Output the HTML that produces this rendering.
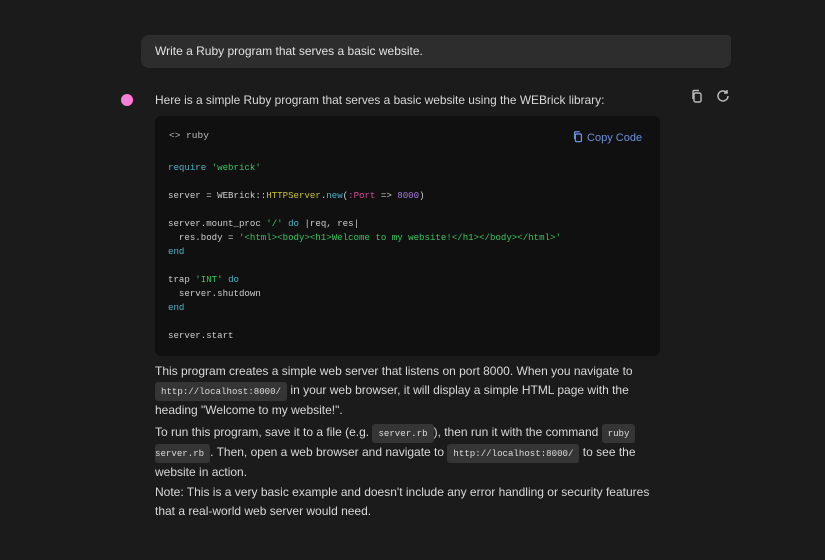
<!DOCTYPE html>
<html><head><style>
body{margin:0;width:825px;height:560px;background:#1b1b1b;font-family:"Liberation Sans",sans-serif;color:#d9d9d9;position:relative;overflow:hidden}
.ab{position:absolute}
.bubble{left:141px;top:35px;width:590px;height:33px;background:#2d2d2d;border-radius:8px 4px 8px 8px}
.bubble span{position:absolute;left:14px;top:9px;font-size:12px;color:#e2e2e2}
.dot{left:121px;top:94px;width:12px;height:12px;border-radius:50%;background:#f77fd8}
.intro{left:155px;top:93px;font-size:11.9px}
.code{left:155px;top:116px;width:505px;height:240px;background:#101010;border-radius:6px}
pre{margin:0;position:absolute;left:13px;top:45px;font-family:"Liberation Mono",monospace;font-size:9.1px;line-height:14px;color:#cfcfcf}
.k{color:#4fb3c8}.s{color:#3cc361}.y{color:#c7c13d}.p{color:#d84a9a}.n{color:#a67bd8}
.lang{left:14px;top:14px;font-family:"Liberation Mono",monospace;font-size:9.5px;color:#bbb}
.copy{left:417px;top:14px;font-size:11px;color:#6d8fe0}
.txt{left:155px;width:505px;font-size:12px;line-height:19px}
code{font-family:"Liberation Mono",monospace;font-size:9.1px;background:#353535;border-radius:3px;padding:4px 6px;color:#ddd}
p{margin:0}
</style></head><body>
<div class="ab bubble"><span>Write a Ruby program that serves a basic website.</span></div>
<div class="ab dot"></div>
<div class="ab intro">Here is a simple Ruby program that serves a basic website using the WEBrick library:</div>
<svg class="ab" style="left:690px;top:89px" width="14" height="14" viewBox="0 0 14 14" fill="none" stroke="#bbb" stroke-width="1.4"><rect x="4" y="4" width="7" height="9" rx="1.5"/><path d="M3 10V2.5Q3 1.5 4 1.5h5"/></svg>
<svg class="ab" style="left:716px;top:89px" width="14" height="14" viewBox="0 0 14 14" fill="none" stroke="#bbb" stroke-width="1.5"><path d="M12 7a5 5 0 1 1-1.5-3.6"/><path d="M11 1v3h-3"/></svg>
<div class="ab code">
<div class="ab lang">&lt;&gt; ruby</div>
<div class="ab copy"><svg width="12" height="13" viewBox="0 0 14 14" fill="none" stroke="#6d8fe0" stroke-width="1.5" style="vertical-align:-2px"><rect x="4" y="4" width="7" height="9" rx="1.5"/><path d="M3 10V2.5Q3 1.5 4 1.5h5"/></svg> Copy Code</div>
<pre><span class="k">require</span> <span class="s">'webrick'</span>

server = WEBrick::<span class="y">HTTPServer</span>.<span class="k">new</span>(<span class="p">:Port</span> =&gt; <span class="n">8000</span>)

server.mount_proc <span class="s">'/'</span> <span class="k">do</span> |req, res|
  res.body = <span class="s">'&lt;html&gt;&lt;body&gt;&lt;h1&gt;Welcome to my website!&lt;/h1&gt;&lt;/body&gt;&lt;/html&gt;'</span>
<span class="k">end</span>

trap <span class="s">'INT'</span> <span class="k">do</span>
  server.shutdown
<span class="k">end</span>

server.start</pre>
</div>
<div class="ab txt" style="top:362px"><p>This program creates a simple web server that listens on port 8000. When you navigate to <code>http://localhost:8000/</code> in your web browser, it will display a simple HTML page with the heading "Welcome to my website!".</p></div>
<div class="ab txt" style="top:423px"><p>To run this program, save it to a file (e.g. <code>server.rb</code>), then run it with the command <code>ruby</code> <code style="padding-left:0">server.rb</code>. Then, open a web browser and navigate to <code>http://localhost:8000/</code> to see the website in action.</p></div>
<div class="ab txt" style="top:483px"><p>Note: This is a very basic example and doesn't include any error handling or security features that a real-world web server would need.</p></div>
</body></html>
